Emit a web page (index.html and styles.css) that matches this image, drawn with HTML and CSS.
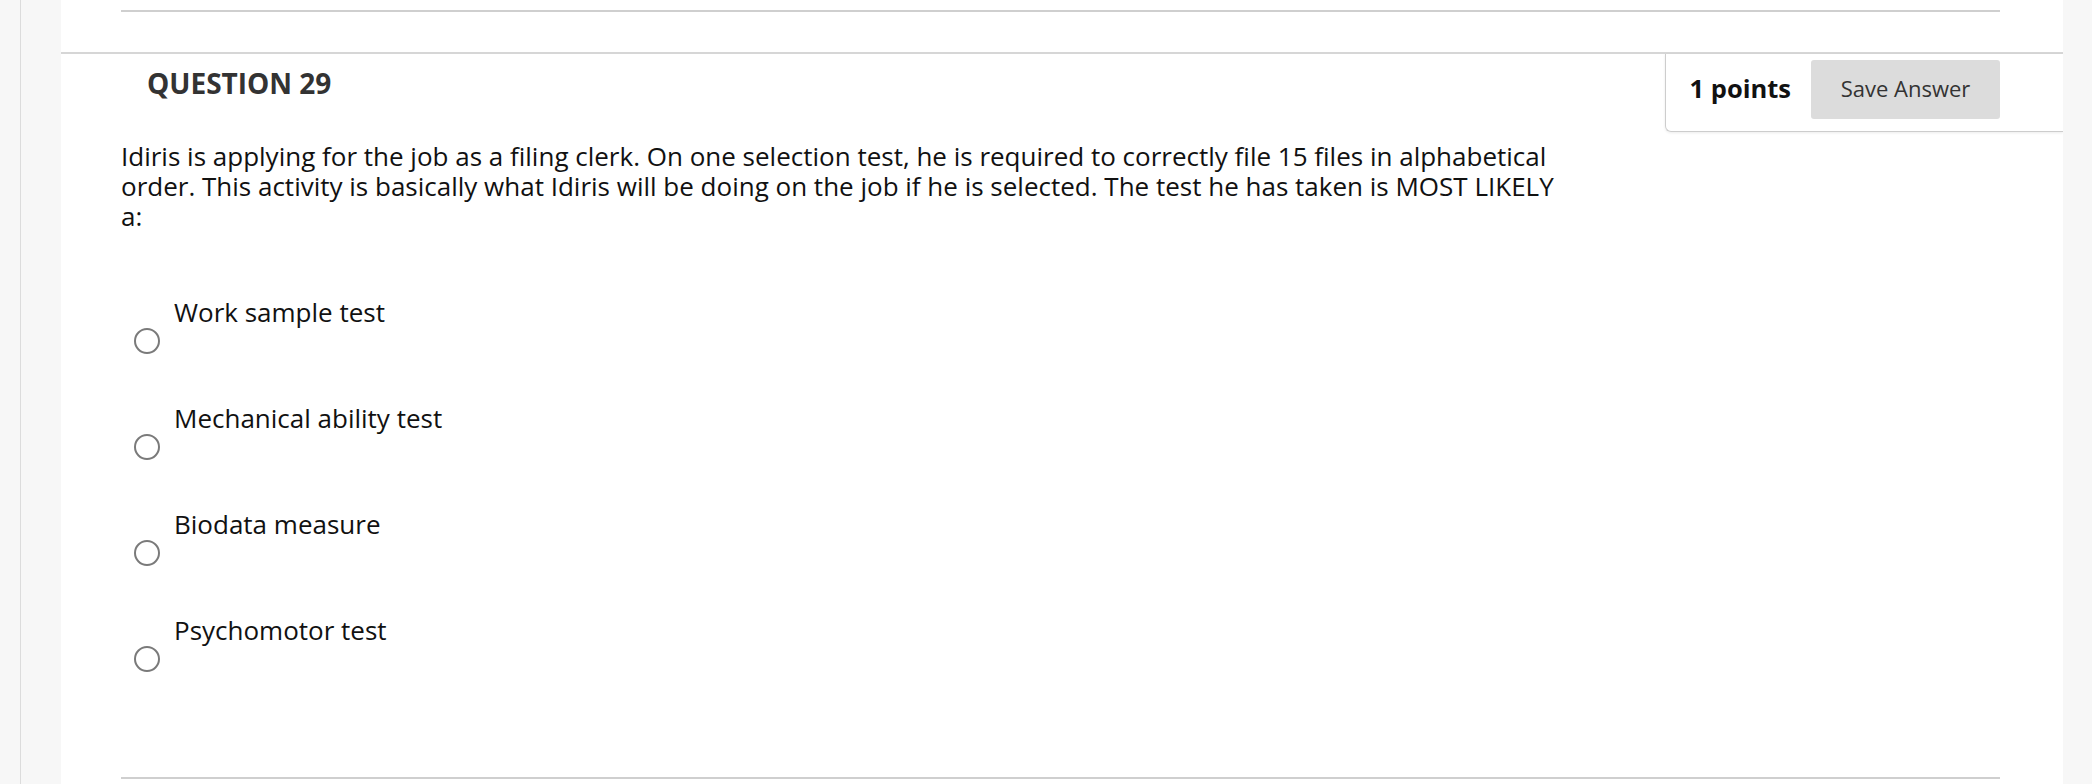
FILE: index.html
```html
<!DOCTYPE html>
<html lang="en">
<head>
<meta charset="utf-8">
<title>Question 29</title>
<link rel="stylesheet" href="styles.css">
</head>
<body>
<div class="page">
  <div class="gutter"><div class="gutter-line"></div></div>
  <main class="panel">
    <hr class="rule">
    <section class="question">
      <div class="q-head">
        <h2 class="q-title">QUESTION 29</h2>
        <div class="points-box">
          <span class="points">1 points</span>
          <button class="save" type="button">Save Answer</button>
        </div>
      </div>
      <p class="q-text">Idiris is applying for the job as a filing clerk. On one selection test, he is required to correctly file 15 files in alphabetical order. This activity is basically what Idiris will be doing on the job if he is selected. The test he has taken is MOST LIKELY a:</p>
      <ul class="options">
        <li class="option"><input class="radio" type="radio" name="q29"><span class="label">Work sample test</span></li>
        <li class="option"><input class="radio" type="radio" name="q29"><span class="label">Mechanical ability test</span></li>
        <li class="option"><input class="radio" type="radio" name="q29"><span class="label">Biodata measure</span></li>
        <li class="option"><input class="radio" type="radio" name="q29"><span class="label">Psychomotor test</span></li>
      </ul>
    </section>
    <hr class="rule bottom">
  </main>
  <div class="right-gutter"></div>
</div>
</body>
</html>
```

FILE: styles.css
```css
* { box-sizing: border-box; }

html, body {
  margin: 0;
  padding: 0;
  background: #f7f7f7;
  font-family: "Open Sans", "Liberation Sans", sans-serif;
  color: #111;
}

.page {
  display: flex;
  width: 2092px;
  height: 784px;
  overflow: hidden;
}

.gutter {
  width: 61px;
  flex: none;
  background: #f7f7f7;
  display: flex;
}

.gutter-line {
  margin-left: 20px;
  width: 1px;
  background: #dcdcdc;
}

.right-gutter {
  width: 29px;
  flex: none;
  background: #f7f7f7;
}

.panel {
  flex: 1;
  background: #fff;
  padding-top: 10px;
}

.rule {
  margin: 0 63px 0 60px;
  border: 0;
  height: 2px;
  background: #cfcfcf;
}

.rule.bottom {
  margin-top: 106px;
}

.question {
  margin-top: 40px;
  border-top: 2px solid #d6d6d6;
}

.q-head {
  display: flex;
  justify-content: space-between;
  align-items: flex-start;
}

.q-title {
  margin: 0;
  padding: 10px 0 0 86px;
  font-size: 28px;
  line-height: 38px;
  font-weight: 700;
  color: #333;
}

.points-box {
  display: flex;
  align-items: center;
  gap: 20px;
  padding: 6px 63px 12px 24px;
  border-left: 1px solid #cdcdcd;
  border-bottom: 1px solid #cdcdcd;
  border-bottom-left-radius: 6px;
  box-shadow: 0 1px 3px rgba(0, 0, 0, 0.08);
}

.points {
  font-size: 25.5px;
  font-weight: 700;
  color: #111;
  line-height: 36px;
  padding-bottom: 4px;
}

.save {
  width: 189px;
  height: 59px;
  border: 0;
  border-radius: 3px;
  background: #dcdcdc;
  font-family: "Open Sans", "Liberation Sans", sans-serif;
  font-size: 22px;
  color: #333;
  padding: 0 0 3px 0;
}

.q-text {
  margin: 9px 0 0 60px;
  width: 1448px;
  font-size: 26px;
  line-height: 30px;
  color: #111;
}

.options {
  list-style: none;
  margin: 66px 0 0 0;
  padding: 0 0 0 73px;
  display: flex;
  flex-direction: column;
  gap: 50px;
}

.option {
  display: flex;
  align-items: flex-start;
  gap: 14px;
  height: 56px;
}

.radio {
  appearance: none;
  -webkit-appearance: none;
  margin: 31px 0 0 0;
  width: 26px;
  height: 26px;
  border: 2px solid #7a7a7a;
  border-radius: 50%;
  background: #fff;
  flex: none;
}

.label {
  font-size: 26px;
  line-height: 30px;
  color: #111;
}
```
